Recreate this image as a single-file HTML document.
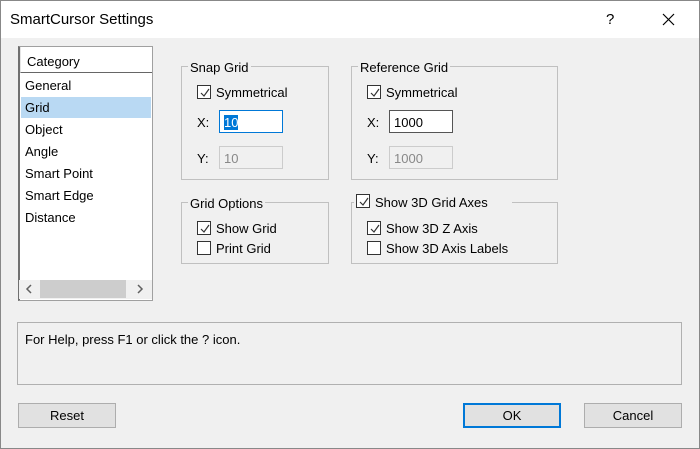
<!DOCTYPE html><html><head><style>
*{box-sizing:border-box;margin:0;padding:0}
body{width:700px;height:449px;background:#f0f0f0;font-family:"Liberation Sans",sans-serif;font-size:13px;color:#000;position:relative;overflow:hidden}
.a{position:absolute}
.t{position:absolute;white-space:nowrap;line-height:16px;margin-top:1px}
.gb{position:absolute;border:1px solid #c0c0c0}
.lg{position:absolute;background:#f0f0f0;padding:0 2px;line-height:16px;white-space:nowrap;padding-top:1px}
.cb{position:absolute;width:14px;height:14px;border:1px solid #333;background:#fff}
.cb svg{position:absolute;left:1px;top:1px}
.in{position:absolute;width:64px;height:23px;border:1px solid #7a7a7a;background:#fff;padding:4px 0 0 4px;line-height:16px}
.dis{border-color:#ccc;color:#888;background:#f0f0f0}
.btn{position:absolute;width:98px;height:25px;border:1px solid #adadad;background:#e1e1e1;text-align:center;line-height:24px}
</style></head><body>
<div class="a" style="left:0;top:0;width:700px;height:38px;background:#fff"></div>
<div class="a" style="left:0;top:0;width:700px;height:449px;border:1px solid #888"></div>
<div class="t" style="left:10px;top:10px;font-size:15px;line-height:18px">SmartCursor Settings</div>
<div class="t" style="left:606px;top:10px;font-size:15px;line-height:18px">?</div>
<svg class="a" style="left:662px;top:13px" width="13" height="13"><path d="M1 1L12 12M12 1L1 12" stroke="#000" stroke-width="1.2"/></svg>

<div class="a" style="left:18px;top:46px;width:135px;height:255px;background:#fff;border:1px solid #a0a0a0;border-left:2px solid #707070"></div>
<div class="a" style="left:20px;top:47px;width:132px;height:26px;border-bottom:1px solid #666;border-left:1px solid #e5e5e5"></div>
<div class="t" style="left:27px;top:53px">Category</div>
<div class="a" style="left:21px;top:97px;width:130px;height:21px;background:#b9d9f3"></div>
<div class="t" style="left:25px;top:77px">General</div>
<div class="t" style="left:25px;top:99px">Grid</div>
<div class="t" style="left:25px;top:121px">Object</div>
<div class="t" style="left:25px;top:143px">Angle</div>
<div class="t" style="left:25px;top:165px">Smart Point</div>
<div class="t" style="left:25px;top:187px">Smart Edge</div>
<div class="t" style="left:25px;top:209px">Distance</div>
<div class="a" style="left:19px;top:280px;width:133px;height:19px;background:#f0f0f0"></div>
<div class="a" style="left:40px;top:280px;width:86px;height:18px;background:#cdcdcd"></div>
<svg class="a" style="left:25px;top:284px" width="8" height="10"><path d="M6 1L2 5L6 9" stroke="#606060" stroke-width="1.5" fill="none"/></svg>
<svg class="a" style="left:136px;top:284px" width="8" height="10"><path d="M2 1L6 5L2 9" stroke="#606060" stroke-width="1.5" fill="none"/></svg>

<div class="gb" style="left:181px;top:66px;width:148px;height:114px"></div>
<div class="lg" style="left:188px;top:59px">Snap Grid</div>
<div class="cb" style="left:197px;top:85px"><svg width="12" height="12"><path d="M2 6L5 9L10 2" stroke="#333" fill="none" stroke-width="1.2"/></svg></div>
<div class="t" style="left:216px;top:84px">Symmetrical</div>
<div class="t" style="left:197px;top:114px">X:</div>
<div class="in" style="left:219px;top:110px;border-color:#0078d7"><span style="background:#0078d7;color:#fff">10</span></div>
<div class="t" style="left:197px;top:150px">Y:</div>
<div class="in dis" style="left:219px;top:146px">10</div>

<div class="gb" style="left:181px;top:202px;width:148px;height:62px"></div>
<div class="lg" style="left:188px;top:195px">Grid Options</div>
<div class="cb" style="left:197px;top:221px"><svg width="12" height="12"><path d="M2 6L5 9L10 2" stroke="#333" fill="none" stroke-width="1.2"/></svg></div>
<div class="t" style="left:216px;top:220px">Show Grid</div>
<div class="cb" style="left:197px;top:241px"></div>
<div class="t" style="left:216px;top:240px">Print Grid</div>

<div class="gb" style="left:351px;top:66px;width:207px;height:114px"></div>
<div class="lg" style="left:358px;top:59px">Reference Grid</div>
<div class="cb" style="left:367px;top:85px"><svg width="12" height="12"><path d="M2 6L5 9L10 2" stroke="#333" fill="none" stroke-width="1.2"/></svg></div>
<div class="t" style="left:386px;top:84px">Symmetrical</div>
<div class="t" style="left:367px;top:114px">X:</div>
<div class="in" style="left:389px;top:110px;border-color:#555">1000</div>
<div class="t" style="left:367px;top:150px">Y:</div>
<div class="in dis" style="left:389px;top:146px">1000</div>

<div class="gb" style="left:351px;top:202px;width:207px;height:62px"></div>
<div class="lg" style="left:354px;top:194px;width:158px;height:16px"></div>
<div class="cb" style="left:356px;top:194px"><svg width="12" height="12"><path d="M2 6L5 9L10 2" stroke="#333" fill="none" stroke-width="1.2"/></svg></div>
<div class="t" style="left:375px;top:194px">Show 3D Grid Axes</div>
<div class="cb" style="left:367px;top:221px"><svg width="12" height="12"><path d="M2 6L5 9L10 2" stroke="#333" fill="none" stroke-width="1.2"/></svg></div>
<div class="t" style="left:386px;top:220px">Show 3D Z Axis</div>
<div class="cb" style="left:367px;top:241px"></div>
<div class="t" style="left:386px;top:240px">Show 3D Axis Labels</div>

<div class="gb" style="left:17px;top:322px;width:665px;height:63px;border-color:#b0b0b0"></div>
<div class="t" style="left:25px;top:331px">For Help, press F1 or click the ? icon.</div>

<div class="btn" style="left:18px;top:403px">Reset</div>
<div class="btn" style="left:463px;top:403px;border:2px solid #0078d7;line-height:22px">OK</div>
<div class="btn" style="left:584px;top:403px">Cancel</div>
</body></html>
